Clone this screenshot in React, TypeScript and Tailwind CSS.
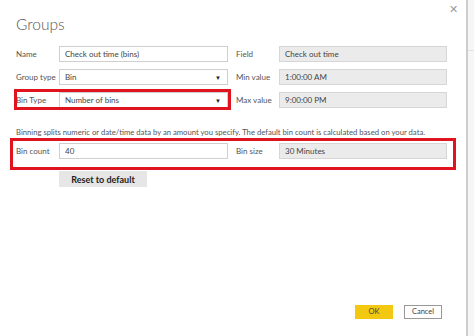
import React from "react"

const font = { fontFamily: 'Lato, "Noto Sans", sans-serif' }

function Row({ label, children }: { label: string; children: React.ReactNode }) {
  return (
    <div className="flex items-center h-4">
      <span className="w-[43px] shrink-0 text-[8px] text-[#555] whitespace-nowrap">{label}</span>
      {children}
    </div>
  )
}

function TextBox({ value, disabled, select }: { value: string; disabled?: boolean; select?: boolean }) {
  return (
    <div
      className={`flex items-center shrink-0 h-4 px-[5px] border text-[8px] text-[#444] ${
        disabled ? "w-[168px] bg-[#ebebeb] border-[#d6d6d6]" : "w-[169px] bg-white border-[#cfcfcf]"
      } ${select ? "bg-[#f2f2f2]" : ""}`}
    >
      <span className="flex-1 truncate">{value}</span>
      {select && <span className="text-[6px] text-[#222] pr-[1px]">▼</span>}
    </div>
  )
}

export default function App() {
  return (
    <div className="flex w-[474px] h-[336px] bg-white overflow-hidden" style={font}>
      <div className="relative w-[466px] h-full bg-white">
        <div className="absolute right-[8px] top-[3px] text-[11px] leading-none text-[#999] font-light">✕</div>

        <div className="pl-4 pt-[12px]">
          <h1 className="text-[15.5px] leading-[24px] font-light text-[#555]">Groups</h1>

          <div className="mt-[10px] flex flex-col gap-[7px]">
            <div className="flex gap-2">
              <Row label="Name"><TextBox value="Check out time (bins)" /></Row>
              <Row label="Field"><TextBox value="Check out time" disabled /></Row>
            </div>
            <div className="flex gap-2">
              <Row label="Group type"><TextBox value="Bin" select /></Row>
              <Row label="Min value"><TextBox value="1:00:00 AM" disabled /></Row>
            </div>
            <div className="flex gap-2">
              <Row label="Bin Type"><TextBox value="Number of bins" select /></Row>
              <Row label="Max value"><TextBox value="9:00:00 PM" disabled /></Row>
            </div>
          </div>

          <p className="mt-[18px] text-[7.7px] leading-[12px] text-[#555] whitespace-nowrap">
            Binning splits numeric or date/time data by an amount you specify. The default bin count is calculated based on your data.
          </p>

          <div className="mt-[5px] flex gap-2">
            <Row label="Bin count"><TextBox value="40" /></Row>
            <Row label="Bin size"><TextBox value="30 Minutes" disabled /></Row>
          </div>

          <button className="ml-[43px] mt-[12px] w-[88px] h-[16px] bg-[#e6e6e6] text-[9px] font-bold text-[#222] leading-none">
            Reset to default
          </button>
        </div>

        <div className="absolute right-[24px] bottom-[17px] flex gap-[11px]">
          <button className="w-[38px] h-[14px] bg-[#f2c811] text-[7.5px] text-[#444] leading-none">OK</button>
          <button className="w-[38px] h-[14px] bg-white border border-[#999] text-[7.5px] text-[#444] leading-none">Cancel</button>
        </div>

        {/* annotation boxes */}
        <div className="absolute left-[14px] top-[89px] w-[217px] h-[21px] border-[3px] border-[#e0141e]" />
        <div className="absolute left-[10px] top-[138px] w-[446px] h-[32px] border-[3px] border-[#e0141e]" />
      </div>
      <div className="w-[2px] h-full bg-[#cdcdcd]" />
      <div className="flex-1 h-full bg-[#f6f6f6] flex flex-col">
        <div className="h-[50px]" />
        <div className="h-px bg-[#e2e2e2]" />
      </div>
    </div>
  )
}
